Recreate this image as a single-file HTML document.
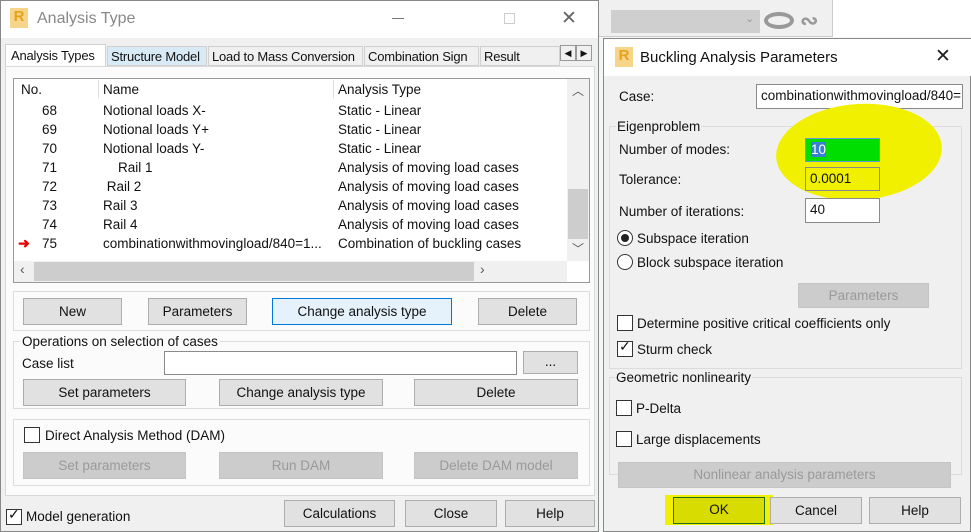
<!DOCTYPE html>
<html><head><meta charset="utf-8"><style>
*{box-sizing:border-box;margin:0;padding:0}
body{width:971px;height:532px;overflow:hidden;background:#f4f7f7;font-family:"Liberation Sans",sans-serif;font-size:13.5px;color:#111;position:relative}
.a{position:absolute;white-space:nowrap}
.btn{position:absolute;background:#e1e1e1;border:1px solid #adadad;text-align:center;font-size:13.5px}
.dis{color:#9a9a9a;background:#cccccc;border-color:#c4c4c4}
.inp{position:absolute;background:#fff;border:1px solid #8a8a8a;padding-left:4px;font-size:13.5px}
.grp{position:absolute;border:1px solid #dcdcdc}
.cb{position:absolute;width:16px;height:16px;border:1px solid #333;background:#fff}
.tab{position:absolute;top:46px;height:20px;background:#f0f0f0;border:1px solid #d0d0d0;padding:2px 3px;font-size:13px;letter-spacing:-0.2px;overflow:hidden}
</style></head><body>
<div class="a" style="left:598px;top:0;width:373px;height:37px;background:#fff"></div>
<div class="a" style="left:598px;top:0;width:235px;height:37px;background:#f0f0f0;border-bottom:1px solid #ccc;border-right:1px solid #ccc"></div>
<div class="a" style="left:611px;top:10px;width:149px;height:23px;background:#cfcfcf"></div>
<div class="a" style="left:745px;top:12px;color:#999;font-size:11px">⌄</div>
<div class="a" style="left:764px;top:12px;width:30px;height:17px;border-radius:50%;border:4px solid #999"></div>
<div class="a" style="left:800px;top:8px;color:#999;font-size:22px;font-weight:bold">∾</div>

<!-- LEFT DIALOG -->
<div class="a" style="left:0;top:0;width:599px;height:532px;background:#f0f0f0;border:1px solid #888"></div>
<div class="a" style="left:1px;top:1px;width:597px;height:37px;background:#fff"></div>
<div class="a" style="left:10px;top:8px;width:18px;height:20px;background:#f6d48a;color:#e6a21a;font-weight:bold;font-size:15px;text-align:center">R</div>
<div class="a" style="left:37px;top:10px;font-size:16px;color:#888">Analysis Type</div>
<div class="a" style="left:392px;top:18px;width:12px;height:1px;background:#777"></div>
<div class="a" style="left:504px;top:13px;width:11px;height:11px;border:1px solid #ccc"></div>
<div class="a" style="left:561px;top:7px;font-size:19px;color:#666">✕</div>
<!-- tabs -->
<div class="a" style="left:5px;top:44px;width:101px;height:24px;background:#fff;border:1px solid #d0d0d0;border-bottom:none;padding:3px 5px;font-size:13px;letter-spacing:-0.2px">Analysis Types</div>
<div class="tab" style="left:107px;width:100px;background:#d9eaf7">Structure Model</div>
<div class="tab" style="left:208px;width:155px">Load to Mass Conversion</div>
<div class="tab" style="left:364px;width:115px">Combination Sign</div>
<div class="tab" style="left:480px;width:80px">Result Filters</div>
<div class="a" style="left:560px;top:45px;width:16px;height:16px;border:1px solid #999;background:#f0f0f0;font-size:9px;text-align:center;line-height:14px">◀</div>
<div class="a" style="left:576px;top:45px;width:16px;height:16px;border:1px solid #999;background:#f0f0f0;font-size:9px;text-align:center;line-height:14px">▶</div>
<!-- panel -->
<div class="a" style="left:5px;top:66px;width:590px;height:430px;background:#fbfbfb;border:1px solid #d8d8d8"></div>
<!-- list -->
<div class="a" style="left:13px;top:78px;width:577px;height:205px;background:#fff;border:1px solid #999"></div>
<div class="a" style="left:21px;top:82px">No.</div>
<div class="a" style="left:98px;top:80px;width:1px;height:18px;background:#ddd"></div>
<div class="a" style="left:103px;top:82px">Name</div>
<div class="a" style="left:333px;top:80px;width:1px;height:18px;background:#ddd"></div>
<div class="a" style="left:338px;top:82px">Analysis Type</div>
<div class="a" style="left:42px;top:101px;line-height:19px">68<br>69<br>70<br>71<br>72<br>73<br>74<br>75</div>
<div class="a" style="left:103px;top:101px;line-height:19px">Notional loads X-<br>Notional loads Y+<br>Notional loads Y-<br>&nbsp;&nbsp;&nbsp;&nbsp;Rail 1<br>&nbsp;Rail 2<br>Rail 3<br>Rail 4<br>combinationwithmovingload/840=1...</div>
<div class="a" style="left:338px;top:101px;line-height:19px">Static - Linear<br>Static - Linear<br>Static - Linear<br>Analysis of moving load cases<br>Analysis of moving load cases<br>Analysis of moving load cases<br>Analysis of moving load cases<br>Combination of buckling cases</div>
<div class="a" style="left:18px;top:235px;color:#e00;font-size:14px;font-weight:bold">➜</div>
<div class="a" style="left:567px;top:79px;width:22px;height:182px;background:#f0f0f0"></div>
<div class="a" style="left:568px;top:189px;width:20px;height:50px;background:#cdcdcd"></div>
<div class="a" style="left:572px;top:82px;color:#555;font-size:12px">︿</div>
<div class="a" style="left:572px;top:240px;color:#555;font-size:12px">﹀</div>
<div class="a" style="left:14px;top:261px;width:553px;height:21px;background:#f0f0f0"></div>
<div class="a" style="left:34px;top:262px;width:440px;height:19px;background:#cdcdcd"></div>
<div class="a" style="left:20px;top:261px;color:#555;font-size:14px">‹</div>
<div class="a" style="left:480px;top:261px;color:#555;font-size:14px">›</div>
<!-- group 1 -->
<div class="grp" style="left:13px;top:291px;width:577px;height:40px"></div>
<div class="btn" style="left:23px;top:298px;width:99px;height:27px;line-height:25px">New</div>
<div class="btn" style="left:148px;top:298px;width:99px;height:27px;line-height:25px">Parameters</div>
<div class="btn" style="left:272px;top:298px;width:180px;height:27px;line-height:25px;border:1px solid #0078d7;background:#e5f1fb">Change analysis type</div>
<div class="btn" style="left:478px;top:298px;width:99px;height:27px;line-height:25px">Delete</div>
<!-- group 2 -->
<div class="grp" style="left:13px;top:341px;width:577px;height:68px"></div>
<div class="a" style="left:20px;top:334px;background:#fbfbfb;padding:0 2px">Operations on selection of cases</div>
<div class="a" style="left:22px;top:356px">Case list</div>
<div class="inp" style="left:164px;top:351px;width:353px;height:24px"></div>
<div class="btn" style="left:523px;top:351px;width:55px;height:23px;line-height:20px">...</div>
<div class="btn" style="left:23px;top:379px;width:163px;height:27px;line-height:25px">Set parameters</div>
<div class="btn" style="left:219px;top:379px;width:164px;height:27px;line-height:25px">Change analysis type</div>
<div class="btn" style="left:414px;top:379px;width:164px;height:27px;line-height:25px">Delete</div>
<!-- group 3 -->
<div class="grp" style="left:13px;top:419px;width:577px;height:67px"></div>
<div class="cb" style="left:24px;top:427px"></div>
<div class="a" style="left:45px;top:428px">Direct Analysis Method (DAM)</div>
<div class="btn dis" style="left:23px;top:452px;width:163px;height:27px;line-height:25px">Set parameters</div>
<div class="btn dis" style="left:219px;top:452px;width:164px;height:27px;line-height:25px">Run DAM</div>
<div class="btn dis" style="left:414px;top:452px;width:164px;height:27px;line-height:25px">Delete DAM model</div>
<!-- bottom -->
<div class="cb" style="left:6px;top:509px"></div>
<div class="a" style="left:8px;top:506px;font-size:14px">✓</div>
<div class="a" style="left:26px;top:509px">Model generation</div>
<div class="btn" style="left:284px;top:500px;width:111px;height:27px;line-height:25px">Calculations</div>
<div class="btn" style="left:405px;top:500px;width:92px;height:27px;line-height:25px">Close</div>
<div class="btn" style="left:505px;top:500px;width:90px;height:27px;line-height:25px">Help</div>

<!-- RIGHT DIALOG -->
<div class="a" style="left:603px;top:38px;width:368px;height:494px;background:#f0f0f0;border:1px solid #888"></div>
<div class="a" style="left:604px;top:39px;width:367px;height:37px;background:#fff"></div>
<div class="a" style="left:615px;top:47px;width:18px;height:20px;background:#f6d48a;color:#e6a21a;font-weight:bold;font-size:15px;text-align:center">R</div>
<div class="a" style="left:640px;top:49px;font-size:15px">Buckling Analysis Parameters</div>
<div class="a" style="left:935px;top:45px;font-size:19px;color:#222">✕</div>
<div class="a" style="left:619px;top:89px">Case:</div>
<div class="inp" style="left:756px;top:84px;width:207px;height:25px;line-height:22px;overflow:hidden">combinationwithmovingload/840=</div>
<div class="grp" style="left:609px;top:126px;width:353px;height:243px"></div>
<div class="a" style="left:616px;top:119px;background:#f0f0f0;padding:0 1px">Eigenproblem</div>
<div class="a" style="left:776px;top:104px;width:166px;height:96px;border-radius:50%;background:#f0f000;transform:rotate(-4deg)"></div>
<div class="a" style="left:619px;top:142px">Number of modes:</div>
<div class="inp" style="left:805px;top:138px;width:75px;height:24px;background:#00dd00;border-color:#6a9ad0;padding-left:5px;line-height:22px"><span style="background:#3a7fd0;color:#fff">10</span></div>
<div class="a" style="left:619px;top:172px">Tolerance:</div>
<div class="inp" style="left:805px;top:167px;width:75px;height:24px;background:#f0f000;line-height:22px">0.0001</div>
<div class="a" style="left:619px;top:204px">Number of iterations:</div>
<div class="inp" style="left:805px;top:198px;width:75px;height:25px;line-height:22px">40</div>
<div class="a" style="left:617px;top:230px;width:16px;height:16px;border-radius:50%;border:1px solid #333;background:#fff"></div>
<div class="a" style="left:621px;top:234px;width:8px;height:8px;border-radius:50%;background:#222"></div>
<div class="a" style="left:637px;top:231px">Subspace iteration</div>
<div class="a" style="left:617px;top:254px;width:16px;height:16px;border-radius:50%;border:1px solid #333;background:#fff"></div>
<div class="a" style="left:637px;top:255px">Block subspace iteration</div>
<div class="btn dis" style="left:798px;top:283px;width:131px;height:25px;line-height:23px">Parameters</div>
<div class="cb" style="left:617px;top:315px"></div>
<div class="a" style="left:637px;top:316px">Determine positive critical coefficients only</div>
<div class="cb" style="left:617px;top:341px"></div>
<div class="a" style="left:619px;top:338px;font-size:14px">✓</div>
<div class="a" style="left:637px;top:342px">Sturm check</div>
<div class="grp" style="left:609px;top:377px;width:353px;height:98px"></div>
<div class="a" style="left:615px;top:370px;background:#f0f0f0;padding:0 1px">Geometric nonlinearity</div>
<div class="cb" style="left:616px;top:400px"></div>
<div class="a" style="left:636px;top:401px">P-Delta</div>
<div class="cb" style="left:616px;top:431px"></div>
<div class="a" style="left:636px;top:432px">Large displacements</div>
<div class="btn dis" style="left:618px;top:462px;width:333px;height:26px;line-height:24px">Nonlinear analysis parameters</div>
<div class="a" style="left:665px;top:495px;width:108px;height:30px;background:#f0f000"></div>
<div class="btn" style="left:673px;top:497px;width:92px;height:27px;line-height:24px;background:#d8dc00;border:1px solid #1e6e1e">OK</div>
<div class="btn" style="left:770px;top:497px;width:92px;height:27px;line-height:25px">Cancel</div>
<div class="btn" style="left:869px;top:497px;width:92px;height:27px;line-height:25px">Help</div>
</body></html>
